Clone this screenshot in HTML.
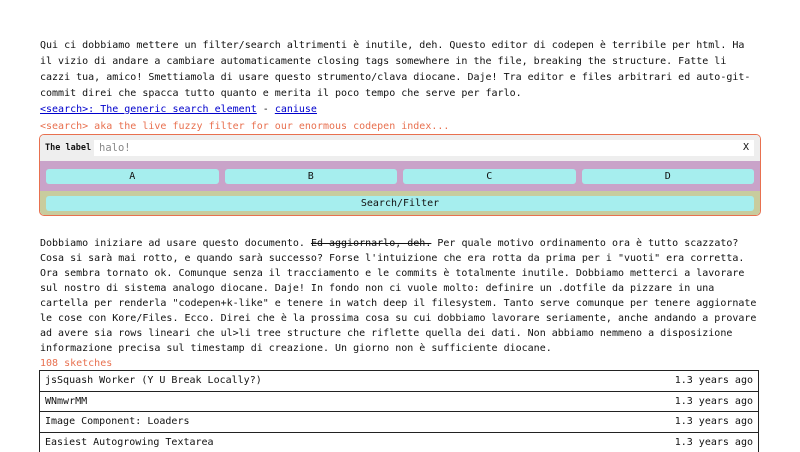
<!DOCTYPE html>
<html><head><meta charset="utf-8"><style>
body{margin:0;background:#fff;font-family:"DejaVu Sans Mono","Liberation Mono",monospace;font-size:10px;line-height:16px;color:#111;}
.w{position:absolute;left:40px;width:760px;white-space:nowrap}
p{margin:0}
a{color:#00c;text-decoration:underline}
.o{color:#e8704f}
.box{position:absolute;left:39px;top:134px;width:720px;height:80px;border:1px solid #e8704f;border-radius:5px;overflow:hidden}
.r1{background:#eee;height:26px;position:relative}
.lab{position:absolute;left:5px;top:6px;font-size:8.5px;font-weight:bold;line-height:14px}
.inp{position:absolute;left:54px;top:5px;width:640px;height:16px;background:#fff;color:#888;line-height:16px;padding-left:5px;font-size:10.5px}
.x{position:absolute;right:6px;top:5px;width:16px;height:16px;background:#fff;text-align:center;line-height:16px}
.r2{background:#c9a3c9;height:30px;display:flex;gap:6px;padding:0 6px;align-items:center}
.r2 div,.r3 div{background:#a6eeee;border-radius:3px;height:15px;line-height:15px;text-align:center;flex:1}
.r3{background:#c8cc9e;height:24px;padding:0 6px;display:flex;align-items:center}
.list{position:absolute;left:39px;top:370px;width:720px}
.row{border:1px solid #222;border-bottom:none;height:19.5px;line-height:19px;display:flex;justify-content:space-between;padding:0 5px}
del{text-decoration:line-through}
</style></head><body>
<div class="w" style="top:38px"><p>Qui ci dobbiamo mettere un filter/search altrimenti è inutile, deh. Questo editor di codepen è terribile per html. Ha<br>il vizio di andare a cambiare automaticamente closing tags somewhere in the file, breaking the structure. Fatte li<br>cazzi tua, amico! Smettiamola di usare questo strumento/clava diocane. Daje! Tra editor e files arbitrari ed auto-git-<br>commit direi che spacca tutto quanto e merita il poco tempo che serve per farlo.</p>
<p><a>&lt;search&gt;: The generic search element</a> - <a>caniuse</a></p></div>
<div class="w o" style="top:119px">&lt;search&gt; aka the live fuzzy filter for our enormous codepen index...</div>
<div class="box">
<div class="r1"><span class="lab">The label</span><div class="inp">halo!</div><div class="x">X</div></div>
<div class="r2"><div>A</div><div>B</div><div>C</div><div>D</div></div>
<div class="r3"><div>Search/Filter</div></div>
</div>
<div class="w" style="top:235.5px;line-height:15px"><p>Dobbiamo iniziare ad usare questo documento. <del>Ed aggiornarlo, deh.</del> Per quale motivo ordinamento ora è tutto scazzato?<br>Cosa si sarà mai rotto, e quando sarà successo? Forse l'intuizione che era rotta da prima per i "vuoti" era corretta.<br>Ora sembra tornato ok. Comunque senza il tracciamento e le commits è totalmente inutile. Dobbiamo metterci a lavorare<br>sul nostro di sistema analogo diocane. Daje! In fondo non ci vuole molto: definire un .dotfile da pizzare in una<br>cartella per renderla "codepen+k-like" e tenere in watch deep il filesystem. Tanto serve comunque per tenere aggiornate<br>le cose con Kore/Files. Ecco. Direi che è la prossima cosa su cui dobbiamo lavorare seriamente, anche andando a provare<br>ad avere sia rows lineari che ul&gt;li tree structure che riflette quella dei dati. Non abbiamo nemmeno a disposizione<br>informazione precisa sul timestamp di creazione. Un giorno non è sufficiente diocane.</p></div>
<div class="w o" style="top:356px">108 sketches</div>
<div class="list">
<div class="row"><span>jsSquash Worker (Y U Break Locally?)</span><span>1.3 years ago</span></div>
<div class="row"><span>WNmwrMM</span><span>1.3 years ago</span></div>
<div class="row"><span>Image Component: Loaders</span><span>1.3 years ago</span></div>
<div class="row"><span>Easiest Autogrowing Textarea</span><span>1.3 years ago</span></div>
</div>
</body></html>
